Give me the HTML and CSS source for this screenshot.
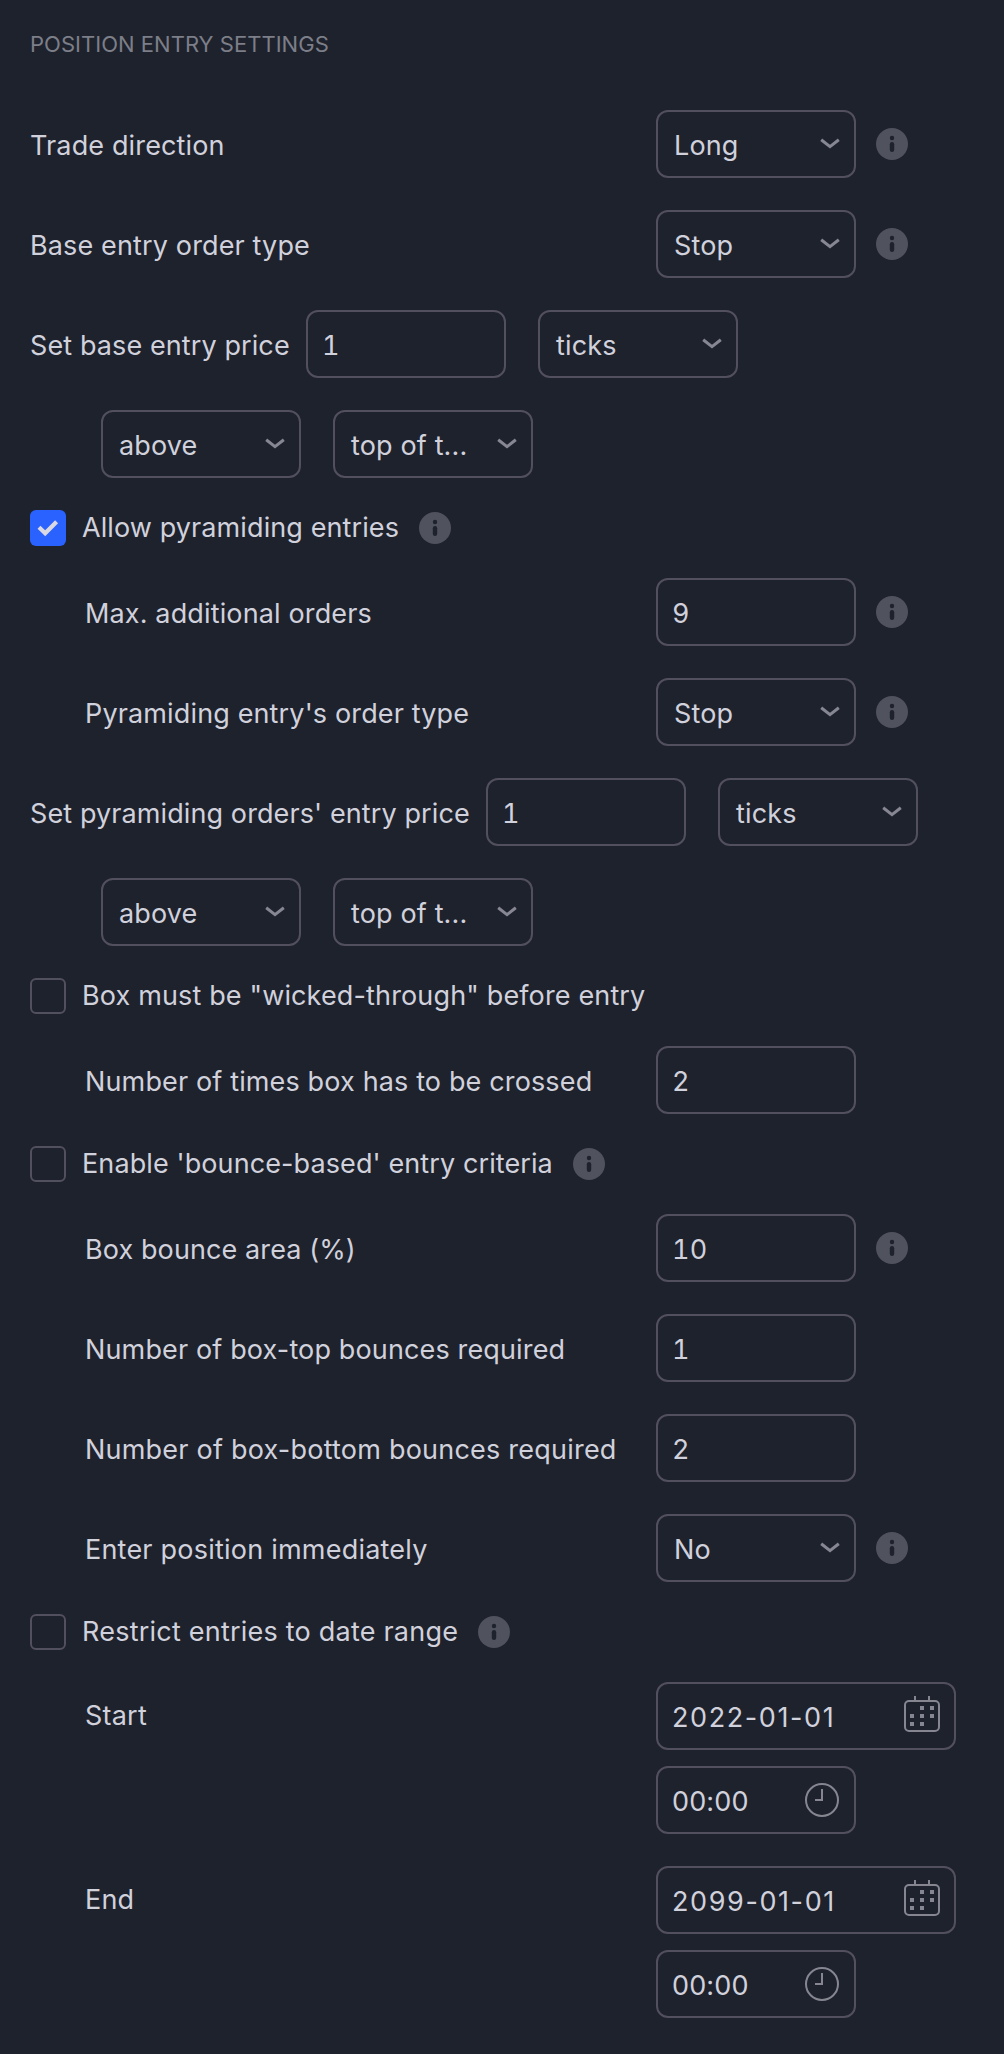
FILE: index.html
```
<!DOCTYPE html>
<html lang="en">
<head>
  <meta charset="UTF-8" />
  <meta name="viewport" content="width=device-width, initial-scale=1.0"/>
  <title>Position Entry Settings</title>
  <link rel="stylesheet" href="styles.css">
</head>
<body>

<!-- shared icons -->
<svg class="sprite" width="0" height="0">
  <symbol id="chevron" viewBox="0 0 20 12">
    <path d="M1.2 1.8 L10 8.7 L18.8 1.8" fill="none" stroke="currentColor" stroke-width="3"/>
  </symbol>
  <symbol id="info" viewBox="0 0 32 32">
    <circle cx="16" cy="16" r="16" fill="currentColor"/>
    <circle cx="16" cy="10" r="2.2" fill="#1e222d"/>
    <rect x="13.8" y="14" width="4.4" height="10" rx="2.2" fill="#1e222d"/>
  </symbol>
  <symbol id="calendar" viewBox="0 0 36 36">
    <rect x="1" y="5" width="34" height="30" rx="4" fill="none" stroke="currentColor" stroke-width="2"/>
    <path d="M10 0h2v4h-2z M24 0h2v4h-2z M16 10h4v4h-4z M26 10h4v4h-4z M6 18h4v4h-4z M16 18h4v4h-4z M26 18h4v4h-4z M6 26h4v4h-4z M16 26h4v4h-4z" fill="currentColor"/>
  </symbol>
  <symbol id="clock" viewBox="0 0 36 36">
    <circle cx="18" cy="18" r="16" fill="none" stroke="currentColor" stroke-width="2"/>
    <path d="M18 7 V18 H11" fill="none" stroke="currentColor" stroke-width="2"/>
  </symbol>
</svg>

<div class="settings">
  <h2>POSITION ENTRY SETTINGS</h2>

  <div class="row">
    <span class="label">Trade direction</span>
    <div class="field select"><span>Long</span><svg class="chevron"><use href="#chevron"/></svg></div>
    <svg class="info"><use href="#info"/></svg>
  </div>

  <div class="row">
    <span class="label">Base entry order type</span>
    <div class="field select"><span>Stop</span><svg class="chevron"><use href="#chevron"/></svg></div>
    <svg class="info"><use href="#info"/></svg>
  </div>

  <div class="row inline">
    <span class="label base-price">Set base entry price</span>
    <div class="field"><span>1</span></div>
    <div class="field select"><span>ticks</span><svg class="chevron"><use href="#chevron"/></svg></div>
  </div>

  <div class="row inline offset">
    <div class="field select"><span>above</span><svg class="chevron"><use href="#chevron"/></svg></div>
    <div class="field select"><span>top of t...</span><svg class="chevron"><use href="#chevron"/></svg></div>
  </div>

  <div class="check-row">
    <span class="checkbox checked">
      <svg width="36" height="36" viewBox="0 0 36 36"><path d="M9 17.3 L15.2 23.2 L26.6 11.7" fill="none" stroke="#d9d9e3" stroke-width="4.2"/></svg>
    </span>
    <span class="check-label tight">Allow pyramiding entries</span>
    <svg class="info"><use href="#info"/></svg>
  </div>

  <div class="row nested">
    <span class="label">Max. additional orders</span>
    <div class="field"><span>9</span></div>
    <svg class="info"><use href="#info"/></svg>
  </div>

  <div class="row nested">
    <span class="label">Pyramiding entry's order type</span>
    <div class="field select"><span>Stop</span><svg class="chevron"><use href="#chevron"/></svg></div>
    <svg class="info"><use href="#info"/></svg>
  </div>

  <div class="row inline">
    <span class="label pyramid-price">Set pyramiding orders' entry price</span>
    <div class="field"><span>1</span></div>
    <div class="field select"><span>ticks</span><svg class="chevron"><use href="#chevron"/></svg></div>
  </div>

  <div class="row inline offset">
    <div class="field select"><span>above</span><svg class="chevron"><use href="#chevron"/></svg></div>
    <div class="field select"><span>top of t...</span><svg class="chevron"><use href="#chevron"/></svg></div>
  </div>

  <div class="check-row">
    <span class="checkbox"></span>
    <span class="check-label">Box must be "wicked-through" before entry</span>
  </div>

  <div class="row nested">
    <span class="label">Number of times box has to be crossed</span>
    <div class="field"><span>2</span></div>
  </div>

  <div class="check-row">
    <span class="checkbox"></span>
    <span class="check-label tight">Enable 'bounce-based' entry criteria</span>
    <svg class="info"><use href="#info"/></svg>
  </div>

  <div class="row nested">
    <span class="label tight">Box bounce area (%)</span>
    <div class="field"><span>10</span></div>
    <svg class="info"><use href="#info"/></svg>
  </div>

  <div class="row nested">
    <span class="label">Number of box-top bounces required</span>
    <div class="field"><span>1</span></div>
  </div>

  <div class="row nested">
    <span class="label loose">Number of box-bottom bounces required</span>
    <div class="field"><span>2</span></div>
  </div>

  <div class="row nested">
    <span class="label loose">Enter position immediately</span>
    <div class="field select"><span>No</span><svg class="chevron"><use href="#chevron"/></svg></div>
    <svg class="info"><use href="#info"/></svg>
  </div>

  <div class="check-row">
    <span class="checkbox"></span>
    <span class="check-label loose">Restrict entries to date range</span>
    <svg class="info"><use href="#info"/></svg>
  </div>

  <div class="row nested dates">
    <span class="label loose">Start</span>
    <div class="date-group">
      <div class="field date"><span>2022-01-01</span><svg class="calendar"><use href="#calendar"/></svg></div>
      <div class="field time"><span>00:00</span><svg class="clock"><use href="#clock"/></svg></div>
    </div>
  </div>

  <div class="row nested dates">
    <span class="label loose">End</span>
    <div class="date-group">
      <div class="field date"><span>2099-01-01</span><svg class="calendar"><use href="#calendar"/></svg></div>
      <div class="field time"><span>00:00</span><svg class="clock"><use href="#clock"/></svg></div>
    </div>
  </div>
</div>

</body>
</html>
```
FILE: styles.css
```
body {
  margin: 0;
  background-color: #1e222d;
  color: #d1d1dc;
  font-family: Inter, "Liberation Sans", sans-serif;
  font-size: 27px;
  letter-spacing: 0.14px;
}

.sprite {
  display: none;
}

.settings {
  display: flex;
  flex-direction: column;
  gap: 32px;
  padding: 30px 30px 36px;
}

h2 {
  margin: 0 0 20px;
  font-size: 22px;
  font-weight: 400;
  line-height: 28px;
  letter-spacing: 0.03px;
  color: #7c7e88;
}

.row {
  display: flex;
  align-items: center;
  min-height: 68px;
}

.label {
  box-sizing: border-box;
  width: 626px;
  padding-top: 4px;
  line-height: 36px;
  white-space: nowrap;
}

.nested .label {
  padding-left: 55px;
}

.tight {
  letter-spacing: 0.1px;
}

.loose {
  letter-spacing: 0.22px;
}

.field {
  box-sizing: border-box;
  display: flex;
  align-items: center;
  justify-content: space-between;
  width: 200px;
  height: 68px;
  padding: 0 14px;
  border: 2px solid #524f5e;
  border-radius: 12px;
  font-variant-numeric: tabular-nums;
}

.field span {
  padding-top: 4px;
  line-height: 36px;
  white-space: nowrap;
}

.select {
  padding-left: 16px;
  font-variant-numeric: normal;
}

/* price rows: controls follow the label directly */
.inline {
  gap: 32px;
}

.inline .label {
  margin-right: -16px;
  letter-spacing: 0.1px;
}

.inline .base-price {
  width: 260px;
}

.inline .pyramid-price {
  width: 440px;
}

.offset {
  padding-left: 71px;
}

.chevron {
  width: 20px;
  height: 12px;
  color: #868792;
}

.info {
  width: 32px;
  height: 32px;
  margin-left: 20px;
  color: #50525d;
}

.check-row {
  display: flex;
  align-items: center;
  height: 36px;
}

.checkbox {
  box-sizing: border-box;
  width: 36px;
  height: 36px;
  margin-right: 16px;
  border: 2px solid #524f5e;
  border-radius: 6px;
}

.checked {
  border: none;
  background-color: #2962ff;
}

.check-label {
  line-height: 36px;
  white-space: nowrap;
}

/* date and time pickers */
.dates {
  align-items: flex-start;
}

.dates .label {
  padding-top: 16px;
}

.date-group {
  display: flex;
  flex-direction: column;
  gap: 16px;
}

.date {
  width: 300px;
  letter-spacing: 1.6px;
  font-variant-numeric: normal;
}

.time {
  font-variant-numeric: normal;
}

.calendar, .clock {
  width: 36px;
  height: 36px;
  color: #868690;
}

.calendar {
  margin-bottom: 4px;
}
```
